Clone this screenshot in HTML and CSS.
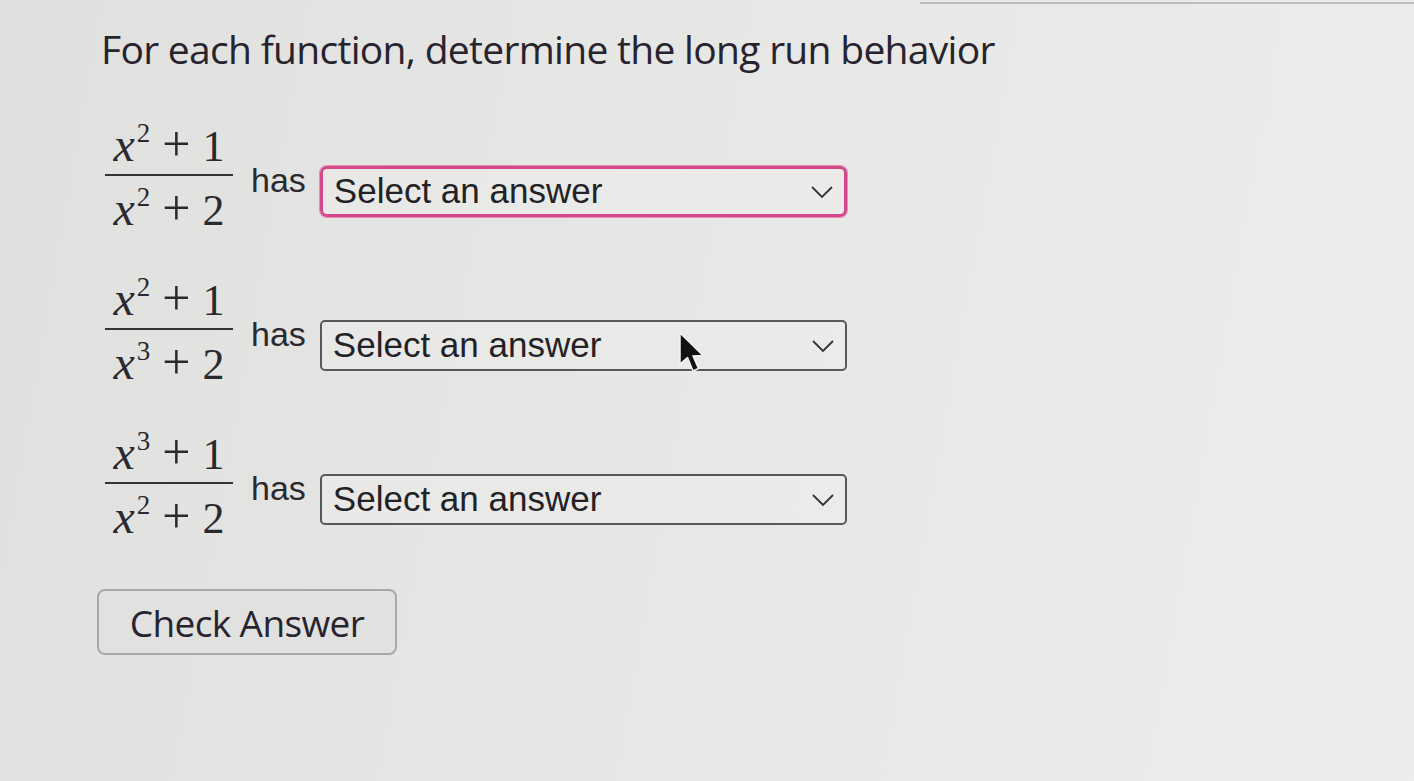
FILE: index.html
```html
<!DOCTYPE html>
<html>
<head>
<meta charset="utf-8">
<link rel="stylesheet" href="styles.css">
</head>
<body>
<div class="topline"></div>
<main class="page">
  <h1 class="prompt">For each function, determine the long run behavior</h1>

  <div class="row">
    <span class="frac">
      <span class="num"><i>x</i><sup>2</sup><span class="op">+</span>1</span>
      <span class="bar"></span>
      <span class="den"><i>x</i><sup>2</sup><span class="op">+</span>2</span>
    </span>
    <span class="has">has</span>
    <span class="select focused">
      <span class="label">Select an answer</span>
      <svg class="chev" viewBox="0 0 24 14" width="24" height="14"><path d="M2 2 L12 12 L22 2" fill="none" stroke="#333" stroke-width="1.8"/></svg>
    </span>
  </div>

  <div class="row">
    <span class="frac">
      <span class="num"><i>x</i><sup>2</sup><span class="op">+</span>1</span>
      <span class="bar"></span>
      <span class="den"><i>x</i><sup>3</sup><span class="op">+</span>2</span>
    </span>
    <span class="has">has</span>
    <span class="select">
      <span class="label">Select an answer</span>
      <svg class="chev" viewBox="0 0 24 14" width="24" height="14"><path d="M2 2 L12 12 L22 2" fill="none" stroke="#333" stroke-width="1.8"/></svg>
      <svg class="cursor" viewBox="0 0 28 44" width="28" height="44"><path d="M2 1 L2 32 L9.5 25.5 L15 39 L20.5 36.5 L15 24 L25 23.5 Z" fill="#111" stroke="#f4f4f4" stroke-width="1.5" stroke-linejoin="round"/></svg>
    </span>
  </div>

  <div class="row last">
    <span class="frac">
      <span class="num"><i>x</i><sup>3</sup><span class="op">+</span>1</span>
      <span class="bar"></span>
      <span class="den"><i>x</i><sup>2</sup><span class="op">+</span>2</span>
    </span>
    <span class="has">has</span>
    <span class="select">
      <span class="label">Select an answer</span>
      <svg class="chev" viewBox="0 0 24 14" width="24" height="14"><path d="M2 2 L12 12 L22 2" fill="none" stroke="#333" stroke-width="1.8"/></svg>
    </span>
  </div>

  <button class="check">Check Answer</button>
</main>
</body>
</html>
```

FILE: styles.css
```css
html, body {
  margin: 0;
  padding: 0;
  height: 100%;
}
body {
  background: linear-gradient(100deg, #e0e0de 0%, #e6e6e4 40%, #ededeb 100%);
  color: #2c2b31;
  overflow: hidden;
  position: relative;
}
.topline {
  position: absolute;
  left: 920px;
  right: 0;
  top: 2px;
  height: 2px;
  background: #bdbdbb;
}
.page {
  padding: 22px 0 0 101px;
  display: flex;
  flex-direction: column;
  align-items: flex-start;
}
.prompt {
  margin: 0 0 56px 0;
  font-family: "Open Sans", sans-serif;
  font-weight: 400;
  font-size: 39px;
  letter-spacing: -0.7px;
  color: #27242f;
}
.row {
  display: flex;
  align-items: center;
  height: 120px;
  margin-bottom: 34px;
}
.row.last {
  margin-bottom: 0;
}
.frac {
  display: inline-flex;
  flex-direction: column;
  align-items: center;
  width: 128px;
  margin-left: 4px;
  font-family: "Liberation Serif", "DejaVu Serif", serif;
  font-size: 44px;
  color: #2a2a2e;
  line-height: 1;
  margin-right: 18px;
  position: relative;
  top: -15px;
}
.frac i {
  font-style: italic;
  font-size: 48px;
}
.frac sup {
  font-size: 27px;
  vertical-align: 19px;
  line-height: 0;
  margin-left: 2px;
}
.frac .op {
  margin: 0 12px;
  font-size: 50px;
}
.num, .den {
  display: block;
  white-space: nowrap;
}
.bar {
  display: block;
  width: 100%;
  height: 2px;
  background: #333;
  margin: 5px 0 7px;
}
.has {
  font-family: "Liberation Sans", Arial, sans-serif;
  font-size: 34px;
  color: #2a2a2e;
  margin-right: 14px;
  position: relative;
  top: -11px;
}
.select {
  position: relative;
  display: flex;
  align-items: center;
  justify-content: space-between;
  box-sizing: border-box;
  width: 527px;
  height: 51px;
  padding: 0 10px 0 11px;
  border: 2px solid #58585c;
  border-radius: 5px;
  background: rgba(255, 255, 255, 0.15);
  font-family: "Liberation Sans", Arial, sans-serif;
  font-size: 35px;
  color: #222226;
}
.select.focused {
  border: 3px solid #d3488a;
  border-radius: 7px;
  box-shadow: 0 0 0 1px #e58db5;
}
.chev {
  margin-top: 2px;
}
.cursor {
  position: absolute;
  left: 356px;
  top: 10px;
}
.check {
  margin-top: 30px;
  width: 300px;
  height: 66px;
  box-sizing: border-box;
  border: 2px solid #a8a8a8;
  border-radius: 8px;
  background: #e1e1df;
  font-family: "Open Sans", sans-serif;
  font-size: 37px;
  color: #27242f;
  letter-spacing: -0.6px;
  padding: 0;
  margin-left: -4px;
}
```
